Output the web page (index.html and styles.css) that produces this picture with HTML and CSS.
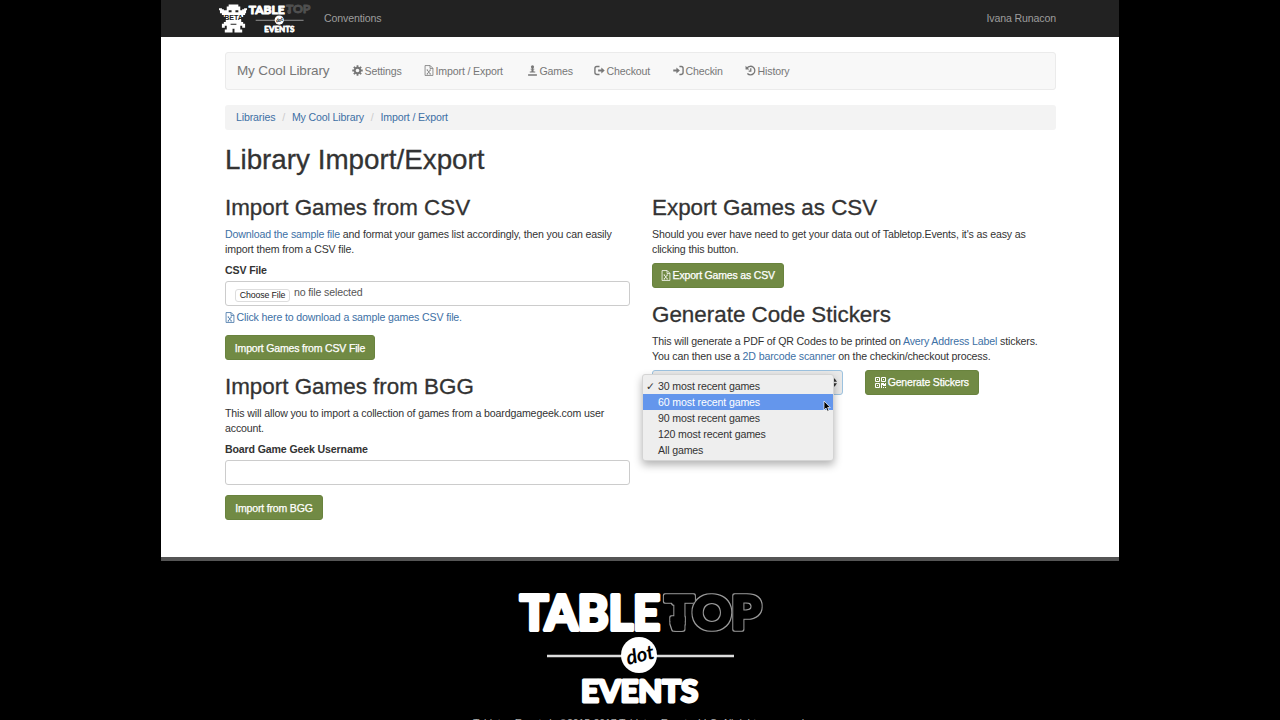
FILE: index.html
```html
<!DOCTYPE html>
<html lang="en">
<head>
    <meta charset="UTF-8">
    <meta name="viewport" content="width=device-width, initial-scale=1.0">
    <title>Library Import/Export</title>
    <link rel="stylesheet" href="styles.css">
</head>
<body>
    <!-- shared icons -->
    <svg class="defs" width="0" height="0">
        <filter id="outline" x="-5%" y="-10%" width="110%" height="120%">
            <feMorphology in="SourceGraphic" operator="dilate" radius="1" result="big"/>
            <feComposite in="big" in2="SourceGraphic" operator="out"/>
        </filter>
        <symbol id="logo" viewBox="0 0 246 114">
            <g class="logo-solid">
                <text x="3" y="38" font-size="47" stroke-width="4" textLength="140" lengthAdjust="spacingAndGlyphs">TABLE</text>
                <text x="64" y="110" font-size="31" stroke-width="3" textLength="117" lengthAdjust="spacingAndGlyphs">EVENTS</text>
            </g>
            <g class="logo-outline">
                <text x="148" y="37" font-size="46" textLength="96" lengthAdjust="spacingAndGlyphs">TOP</text>
                <path d="M154 5H167L164 11H157ZM155 26H166V29H155ZM155 31H166L164 37H157Z"/>
            </g>
            <path class="logo-line" d="M30 64H217"/>
            <circle cx="122" cy="63" r="18" fill="#fff"/>
            <text class="logo-dot" x="123" y="70" font-size="20" text-anchor="middle" transform="rotate(-14 122 63)">dot</text>
        </symbol>
        <symbol id="file" viewBox="0 0 12 14">
            <path d="M1 .7H7.5L11 4.2V13.3H1ZM7.3 1V4.4H11M3.7 6.3L7.7 11.5M7.7 6.3L3.7 11.5M3 6.3H4.8M6.7 6.3H8.4M3 11.5H4.8M6.7 11.5H8.4" fill="none" stroke="currentColor"/>
        </symbol>
    </svg>

    <div class="page">
        <header class="topbar">
            <div class="brand">
                <svg class="monster" viewBox="0 0 30 31">
                    <path fill="#fff" d="M10 1H20V3H22V7H24V6H26V5H29V7H28V10H27V12H25V14H23V19H25V21H27V25H24V23H22V27H24V30H16V26H14V30H6V27H8V23H6V25H3V21H5V19H7V14H5V12H3V10H1V7H0V5H3V6H5V7H8V3H10Z"/>
                    <path fill="#222" d="M10 7H13V9H10ZM17 7H20V9H17ZM12 21H18V22H12Z"/>
                    <text x="5.5" y="17.5" font-size="7.5" textLength="19" lengthAdjust="spacingAndGlyphs">BETA</text>
                </svg>
                <svg class="logo-small"><use href="#logo"/></svg>
            </div>
            <a class="conventions">Conventions</a>
            <a class="user">Ivana Runacon</a>
        </header>

        <main>
            <nav class="navbar">
                <span class="navbar-brand">My Cool Library</span>
                <a class="nav-settings"><svg class="icon" viewBox="0 0 12 12"><circle cx="6" cy="6" r="3" fill="none" stroke="currentColor" stroke-width="2"/><path d="M6 .3V2.5M6 9.5V11.7M.3 6H2.5M9.5 6H11.7M2 2L3.5 3.5M8.5 8.5L10 10M10 2L8.5 3.5M3.5 8.5L2 10" stroke="currentColor" stroke-width="2"/></svg>Settings</a>
                <a class="nav-import"><svg class="icon file"><use href="#file"/></svg>Import / Export</a>
                <a class="nav-games"><svg class="icon" viewBox="0 0 12 12"><circle cx="6" cy="2" r="1.7" fill="currentColor"/><path d="M5.2 3H6.8L7.3 7.5H4.7ZM3 7.2H9V8.3H3ZM1.2 10H10.8V11.7H1.2ZM4 4H8V5H4Z" fill="currentColor"/></svg>Games</a>
                <a class="nav-checkout"><svg class="icon" viewBox="0 0 12 12"><path d="M6 1.7H3Q1 1.7 1 3.7V8.3Q1 10.3 3 10.3H6" fill="none" stroke="currentColor" stroke-width="1.5"/><path d="M4.5 5H8V2.7L11.7 6L8 9.3V7H4.5Z" fill="currentColor"/></svg>Checkout</a>
                <a class="nav-checkin"><svg class="icon" viewBox="0 0 12 12"><path d="M7 1.7H9Q11 1.7 11 3.7V8.3Q11 10.3 9 10.3H7" fill="none" stroke="currentColor" stroke-width="1.5"/><path d="M.3 5H3.7V2.7L7.5 6L3.7 9.3V7H.3Z" fill="currentColor"/></svg>Checkin</a>
                <a class="nav-history"><svg class="icon" viewBox="0 0 12 12"><path d="M2.3 3.2A4.7 4.7 0 1 1 2.6 9.3M6.3 3.5V6.6H4" fill="none" stroke="currentColor" stroke-width="1.4"/><path d="M.6.8V5H4.8Z" fill="currentColor"/></svg>History</a>
            </nav>

            <div class="breadcrumb">
                <a>Libraries</a><i>/</i><a>My Cool Library</a><i>/</i><a>Import / Export</a>
            </div>

            <h1>Library Import/Export</h1>

            <div class="columns">
                <section>
                    <h2>Import Games from CSV</h2>
                    <p><a>Download the sample file</a> and format your games list accordingly, then you can easily<br>import them from a CSV file.</p>
                    <label>CSV File</label>
                    <div class="form-control file-input">
                        <span class="choose">Choose File</span>
                        <span>no file selected</span>
                    </div>
                    <a class="help"><svg class="icon file"><use href="#file"/></svg>Click here to download a sample games CSV file.</a>
                    <button class="btn btn-csv">Import Games from CSV File</button>

                    <h2>Import Games from BGG</h2>
                    <p>This will allow you to import a collection of games from a boardgamegeek.com user<br>account.</p>
                    <label for="username">Board Game Geek Username</label>
                    <input type="text" id="username" class="form-control">
                    <button class="btn btn-bgg">Import from BGG</button>
                </section>

                <section class="export">
                    <h2>Export Games as CSV</h2>
                    <p>Should you ever have need to get your data out of Tabletop.Events, it's as easy as<br>clicking this button.</p>
                    <button class="btn btn-export"><svg class="icon file"><use href="#file"/></svg>Export Games as CSV</button>

                    <h2>Generate Code Stickers</h2>
                    <p>This will generate a PDF of QR Codes to be printed on <a>Avery Address Label</a> stickers.<br>You can then use a <a>2D barcode scanner</a> on the checkin/checkout process.</p>
                    <div class="stickers">
                        <div class="select">
                            <svg class="arrows" viewBox="0 0 6 10"><path d="M0 4L3 0L6 4ZM0 6H6L3 10Z" fill="#333"/></svg>
                            <ul class="menu">
                                <li class="checked">30 most recent games</li>
                                <li class="active">60 most recent games</li>
                                <li>90 most recent games</li>
                                <li>120 most recent games</li>
                                <li>All games</li>
                            </ul>
                            <svg class="cursor" viewBox="0 0 8 12"><path d="M1 1V10L3 8L4.5 11.3L6 10.6L4.6 7.5H7.3Z" fill="#000" stroke="#fff" stroke-width=".7"/></svg>
                        </div>
                        <button class="btn btn-stickers"><svg class="icon" viewBox="0 0 11 11"><path d="M.5.5H4.5V4.5H.5ZM6.5.5H10.5V4.5H6.5ZM.5 6.5H4.5V10.5H.5Z" fill="none" stroke="currentColor"/><path d="M2 2H3V3H2ZM8 2H9V3H8ZM2 8H3V9H2ZM6 6H9V7H10V6H11V9H8V8H7V11H6ZM8 10H9V11H8ZM10 10H11V11H10Z" fill="currentColor"/></svg>Generate Stickers</button>
                    </div>
                </section>
            </div>
        </main>
    </div>

    <footer>
        <svg class="logo-big"><use href="#logo"/></svg>
        <p>Tabletop.Events is ©2015-2017 Tabletop Events, LLC. All rights reserved.</p>
    </footer>
</body>
</html>
```

FILE: styles.css
```css
* {
    box-sizing: border-box;
}
body {
    margin: 0;
    height: 720px;
    overflow: hidden;
    background: #000;
    color: #333;
    font-family: "Liberation Sans", Arial, sans-serif;
    font-size: 10.6px;
    line-height: 14.8px;
    letter-spacing: -0.14px;
}
.defs {
    position: absolute;
}
a {
    color: #3d70a5;
}
.page {
    width: 958px;
    height: 561px;
    margin-left: 161px;
    background: #fff;
    border-bottom: 4px solid #555;
}
.topbar {
    display: flex;
    align-items: center;
    height: 37px;
    padding: 0 63px 0 57px;
    background: #222;
}
.topbar a {
    color: #9d9d9d;
}
.brand {
    display: flex;
    width: 106px;
    padding-left: 1px;
}
.monster {
    width: 29px;
    height: 31px;
}
.monster text {
    font-weight: bold;
    fill: #222;
}
.logo-small {
    width: 63px;
    height: 31px;
    --top-color: #505050;
    --top-filter: none;
}
.user {
    margin-left: auto;
}
.logo-solid {
    fill: #fff;
    stroke: #fff;
    stroke-linejoin: round;
    font-family: Lato, sans-serif;
    font-weight: 700;
    letter-spacing: 0;
}
.logo-outline {
    fill: var(--top-color);
    stroke: var(--top-color);
    stroke-width: 3.5;
    stroke-linejoin: round;
    filter: var(--top-filter);
    font-family: Lato, sans-serif;
    font-weight: 700;
    letter-spacing: 0;
}
.logo-line {
    stroke: #ddd;
    stroke-width: 2.4;
}
.logo-dot {
    fill: #000;
    font-family: Lato, sans-serif;
    font-weight: bold;
    font-style: italic;
    letter-spacing: 0;
}
main {
    padding: 15px 63px 0 64px;
}
.navbar {
    display: flex;
    align-items: center;
    height: 38px;
    padding-left: 11px;
    background: #f8f8f8;
    border: 1px solid #ebebeb;
    border-radius: 3px;
    color: #777;
}
.navbar a {
    display: flex;
    align-items: center;
    color: #777;
}
.navbar-brand {
    width: 115px;
    font-size: 13.5px;
}
.icon {
    width: 11px;
    height: 11px;
    margin-right: 1.5px;
    flex: none;
}
.icon.file {
    width: 10px;
}
.nav-settings {
    width: 72px;
}
.nav-import {
    width: 103px;
}
.nav-games {
    width: 67px;
}
.nav-checkout {
    width: 79px;
}
.nav-checkin {
    width: 72px;
}
.breadcrumb {
    display: flex;
    align-items: center;
    height: 25px;
    margin-top: 15px;
    padding-left: 11px;
    background: #f3f3f3;
    border-radius: 3px;
}
.breadcrumb i {
    width: 16.5px;
    text-align: center;
    font-style: normal;
    color: #ccc;
}
h1, h2 {
    font-weight: normal;
    letter-spacing: 0;
    -webkit-text-stroke: 0.3px #333;
}
h1 {
    margin: 15px 0 20px;
    font-size: 27.8px;
    line-height: 30px;
}
h2 {
    margin: 14px 0 7.2px;
    font-size: 22.4px;
    line-height: 25px;
}
h2:first-child {
    margin-top: 0;
}
.columns {
    display: grid;
    grid-template-columns: 405px 404px;
    gap: 22px;
}
p {
    margin: 0 0 6.8px;
    white-space: nowrap;
}
.export p {
    margin-bottom: 6.2px;
}
label {
    display: block;
    margin-bottom: 4px;
    font-weight: bold;
    line-height: 13.6px;
}
.form-control {
    display: block;
    width: 100%;
    height: 25px;
    border: 1px solid #ccc;
    border-radius: 3px;
    background: #fff;
}
.file-input {
    display: flex;
    align-items: flex-start;
    padding: 3px 9px;
    color: #555;
}
.choose {
    width: 55px;
    margin: 4px 4px 0 0;
    padding: 0;
    border: 1px solid #ddd;
    border-radius: 3px;
    font-size: 8.8px;
    line-height: 11px;
    text-align: center;
    color: #222;
}
.help {
    display: flex;
    align-items: center;
    margin: 4.2px 0 10px;
}
.btn {
    display: flex;
    align-items: center;
    justify-content: center;
    height: 25px;
    padding: 0;
    border: 1px solid #69833e;
    border-radius: 3px;
    background: #718a44;
    color: #fff;
    font-family: inherit;
    font-size: 10.5px;
    letter-spacing: -0.17px;
    -webkit-text-stroke: 0.25px #fff;
}
.btn-csv {
    width: 150px;
}
.btn-bgg {
    width: 98px;
    margin-top: 10px;
}
.btn-export {
    width: 132px;
}
.btn-stickers {
    width: 114px;
}
.stickers {
    display: flex;
    gap: 22px;
}
.select {
    position: relative;
    width: 191px;
    height: 25px;
    border: 1px solid #9dc3e0;
    border-radius: 3px;
    background: #e9e9e9;
}
.arrows {
    position: absolute;
    right: 5px;
    top: 7px;
    width: 5px;
    height: 9px;
}
.menu {
    position: absolute;
    left: -11px;
    top: 3px;
    width: 192px;
    height: 87px;
    margin: 0;
    padding: 3px 0;
    list-style: none;
    background: #eee;
    border: 1px solid #d4d4d4;
    border-radius: 3px;
    box-shadow: 0 4px 8px rgba(0, 0, 0, 0.3);
}
.menu li {
    height: 16px;
    padding-left: 15px;
    line-height: 16px;
}
.menu .checked::before {
    content: "✓";
    float: left;
    width: 12px;
    margin-left: -12px;
    font-family: "DejaVu Sans", sans-serif;
    font-weight: bold;
}
.menu .active {
    background: #6496ec;
    color: #fff;
}
.cursor {
    position: absolute;
    left: 170px;
    top: 29px;
    width: 8px;
    height: 12px;
}
footer {
    display: flex;
    flex-direction: column;
    align-items: center;
    padding-top: 31px;
    color: #aaa;
}
.logo-big {
    width: 246px;
    height: 114px;
    --top-color: #999;
    --top-filter: url(index.html#outline);
}
footer p {
    margin-top: 10px;
}
```
